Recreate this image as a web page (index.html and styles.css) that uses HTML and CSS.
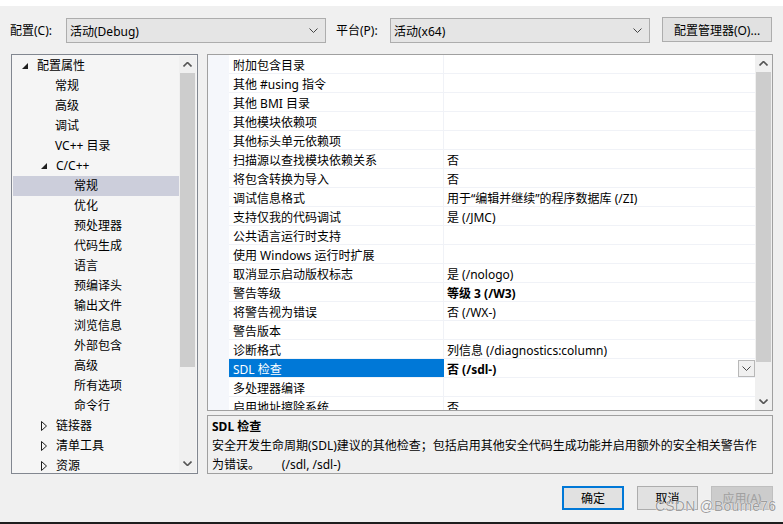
FILE: index.html
```html
<!DOCTYPE html>
<html lang="zh">
<head>
<meta charset="utf-8">
<link rel="stylesheet" href="styles.css">
</head>
<body>
<div class="app">
  <div class="topstrip"></div>
  <div class="toolbar">
    <span class="lbl">配置(C):</span>
    <div class="combo combo-config"><span>活动(Debug)</span><svg class="chev" width="9" height="5" viewBox="0 0 9 5"><path d="M0.5 0.5 L4.5 4.5 L8.5 0.5" fill="none" stroke="#444" stroke-width="1"/></svg></div>
    <span class="lbl lbl-plat">平台(P):</span>
    <div class="combo combo-plat"><span>活动(x64)</span><svg class="chev" width="9" height="5" viewBox="0 0 9 5"><path d="M0.5 0.5 L4.5 4.5 L8.5 0.5" fill="none" stroke="#444" stroke-width="1"/></svg></div>
    <div class="btn btn-mgr">配置管理器(O)...</div>
  </div>
  <div class="main">
    <div class="tree">
      <div class="tree-list">
        <div class="ti l0"><svg class="exp" width="6" height="6" viewBox="0 0 6 6"><polygon points="6,0 6,6 0,6" fill="#1e1e1e"/></svg><span>配置属性</span></div>
        <div class="ti l1">常规</div>
        <div class="ti l1">高级</div>
        <div class="ti l1">调试</div>
        <div class="ti l1">VC++ 目录</div>
        <div class="ti l1e"><svg class="exp" width="6" height="6" viewBox="0 0 6 6"><polygon points="6,0 6,6 0,6" fill="#1e1e1e"/></svg><span>C/C++</span></div>
        <div class="ti l2 sel">常规</div>
        <div class="ti l2">优化</div>
        <div class="ti l2">预处理器</div>
        <div class="ti l2">代码生成</div>
        <div class="ti l2">语言</div>
        <div class="ti l2">预编译头</div>
        <div class="ti l2">输出文件</div>
        <div class="ti l2">浏览信息</div>
        <div class="ti l2">外部包含</div>
        <div class="ti l2">高级</div>
        <div class="ti l2">所有选项</div>
        <div class="ti l2">命令行</div>
        <div class="ti l1e"><svg class="exp2" width="6" height="10" viewBox="0 0 6 10"><polygon points="0.5,0.5 5.5,5 0.5,9.5" fill="none" stroke="#1e1e1e" stroke-width="1"/></svg><span>链接器</span></div>
        <div class="ti l1e"><svg class="exp2" width="6" height="10" viewBox="0 0 6 10"><polygon points="0.5,0.5 5.5,5 0.5,9.5" fill="none" stroke="#1e1e1e" stroke-width="1"/></svg><span>清单工具</span></div>
        <div class="ti l1e"><svg class="exp2" width="6" height="10" viewBox="0 0 6 10"><polygon points="0.5,0.5 5.5,5 0.5,9.5" fill="none" stroke="#1e1e1e" stroke-width="1"/></svg><span>资源</span></div>
      </div>
      <div class="sbar sbar-tree">
        <div class="arr"><svg width="9" height="5" viewBox="0 0 9 5"><path d="M0.5 4.5 L4.5 0.5 L8.5 4.5" fill="none" stroke="#555" stroke-width="1.6"/></svg></div>
        <div class="track"><div class="thumb thumb-tree"></div></div>
        <div class="arr"><svg width="9" height="5" viewBox="0 0 9 5"><path d="M0.5 0.5 L4.5 4.5 L8.5 0.5" fill="none" stroke="#555" stroke-width="1.6"/></svg></div>
      </div>
    </div>
    <div class="right">
      <div class="grid">
        <div class="margin"></div>
        <div class="rows">
          <div class="row"><div class="nm">附加包含目录</div><div class="vl"></div></div>
          <div class="row"><div class="nm">其他 #using 指令</div><div class="vl"></div></div>
          <div class="row"><div class="nm">其他 BMI 目录</div><div class="vl"></div></div>
          <div class="row"><div class="nm">其他模块依赖项</div><div class="vl"></div></div>
          <div class="row"><div class="nm">其他标头单元依赖项</div><div class="vl"></div></div>
          <div class="row"><div class="nm">扫描源以查找模块依赖关系</div><div class="vl">否</div></div>
          <div class="row"><div class="nm">将包含转换为导入</div><div class="vl">否</div></div>
          <div class="row"><div class="nm">调试信息格式</div><div class="vl">用于“编辑并继续”的程序数据库 (/ZI)</div></div>
          <div class="row"><div class="nm">支持仅我的代码调试</div><div class="vl">是 (/JMC)</div></div>
          <div class="row"><div class="nm">公共语言运行时支持</div><div class="vl"></div></div>
          <div class="row"><div class="nm">使用 Windows 运行时扩展</div><div class="vl"></div></div>
          <div class="row"><div class="nm">取消显示启动版权标志</div><div class="vl">是 (/nologo)</div></div>
          <div class="row"><div class="nm">警告等级</div><div class="vl b">等级 3 (/W3)</div></div>
          <div class="row"><div class="nm">将警告视为错误</div><div class="vl">否 (/WX-)</div></div>
          <div class="row"><div class="nm">警告版本</div><div class="vl"></div></div>
          <div class="row"><div class="nm">诊断格式</div><div class="vl">列信息 (/diagnostics:column)</div></div>
          <div class="row selrow"><div class="nm">SDL 检查</div><div class="vl b"><span class="vt">否 (/sdl-)</span><div class="ddbtn"><svg width="9" height="5" viewBox="0 0 9 5"><path d="M0.5 0.5 L4.5 4.5 L8.5 0.5" fill="none" stroke="#444" stroke-width="1"/></svg></div></div></div>
          <div class="row"><div class="nm">多处理器编译</div><div class="vl"></div></div>
          <div class="row"><div class="nm">启用地址擦除系统</div><div class="vl">否</div></div>
        </div>
        <div class="sbar sbar-grid">
          <div class="arr"><svg width="9" height="5" viewBox="0 0 9 5"><path d="M0.5 4.5 L4.5 0.5 L8.5 4.5" fill="none" stroke="#555" stroke-width="1.6"/></svg></div>
          <div class="track"><div class="thumb thumb-grid"></div></div>
          <div class="arr"><svg width="9" height="5" viewBox="0 0 9 5"><path d="M0.5 0.5 L4.5 4.5 L8.5 0.5" fill="none" stroke="#555" stroke-width="1.6"/></svg></div>
        </div>
      </div>
      <div class="desc">
        <div class="desc-title">SDL 检查</div>
        <div class="desc-text">安全开发生命周期(SDL)建议的其他检查；包括启用其他安全代码生成功能并启用额外的安全相关警告作为错误。&nbsp;&nbsp;&nbsp;&nbsp;&nbsp;&nbsp;&nbsp;(/sdl, /sdl-)</div>
      </div>
    </div>
  </div>
  <div class="buttons">
    <div class="btn btn-ok">确定</div>
    <div class="btn btn-cancel">取消</div>
    <div class="btn btn-apply">应用(A)</div>
  </div>
  <div class="bottomstrip"></div>
  <div class="watermark">CSDN @Bourne76</div>
</div>
</body>
</html>
```

FILE: styles.css
```css
* { box-sizing: border-box; }
html, body { margin: 0; padding: 0; }
body {
  width: 783px;
  height: 524px;
  overflow: hidden;
  background: #f0f0f0;
  font-family: "Segoe UI", "Noto Sans", "Noto Sans CJK SC", sans-serif;
  font-size: 12px;
  color: #000;
}
.app { position: relative; width: 783px; height: 524px; display: flex; flex-direction: column; }
.topstrip { height: 6px; background: #fff; }
.toolbar {
  display: flex;
  align-items: center;
  height: 25px;
  margin-top: 12px;
  padding-left: 10px;
}
.lbl { width: 56px; line-height: 25px; }
.lbl-plat { margin-left: 10px; width: 54px; }
.combo {
  height: 25px;
  border: 1px solid #adadad;
  background: #e5e5e5;
  display: flex;
  align-items: center;
  justify-content: space-between;
  padding: 0 5px 0 3px;
}
.combo-config { width: 260px; }
.combo-plat { width: 260px; }
.chev { margin-right: 2px; }
.btn {
  height: 25px;
  border: 1px solid #adadad;
  background: #e1e1e1;
  display: flex;
  align-items: center;
  justify-content: center;
}
.btn-mgr { width: 110px; margin-left: 12px; margin-top: -2px; }

.main { display: flex; margin-top: 11px; padding-left: 11px; }
.tree {
  width: 187px;
  height: 420px;
  border: 1px solid #828790;
  background: #f5f5f5;
  display: flex;
  padding: 1px 1px 1px 1px;
}
.tree-list { flex: 1; overflow: hidden; }
.ti { height: 20px; line-height: 20px; white-space: nowrap; display: flex; align-items: center; }
.ti.l0 { padding-left: 9px; }
.ti.l0 .exp { margin-right: 9px; }
.ti.l1 { padding-left: 42px; }
.ti.l1e { padding-left: 28px; }
.ti.l1e .exp { margin-right: 9px; }
.ti.l1e .exp2 { margin-right: 9px; }
.ti.l2 { padding-left: 61px; }
.ti.sel { background: #cccedb; }

.sbar { width: 17px; display: flex; flex-direction: column; background: #f0f0f0; }
.sbar .arr { height: 17px; display: flex; align-items: center; justify-content: center; }
.sbar .track { flex: 1; position: relative; }
.thumb { background: #cdcdcd; margin: 0 1px; }
.thumb-tree { height: 294px; }
.thumb-grid { height: 290px; }

.right { margin-left: 9px; width: 566px; display: flex; flex-direction: column; }
.grid {
  height: 357px;
  border: 1px solid #a0a0a0;
  background: #fff;
  display: flex;
}
.margin { width: 21px; background: #f5f7fb; }
.rows { flex: 1; overflow: hidden; }
.row { display: flex; height: 19px; border-bottom: 1px solid #f0f2f7; }
.nm { width: 215px; padding: 3px 0 0 4px; line-height: 15px; white-space: nowrap; border-right: 1px solid #f0f2f7; }
.vl { flex: 1; padding: 3px 0 0 3px; line-height: 15px; white-space: nowrap; display: flex; align-items: center; }
.vl.b { font-weight: bold; }
.selrow .nm { background: #0078d7; color: #fff; border-right-color: #0078d7; }
.selrow .vl { padding-top: 0; }
.selrow .vt { padding-top: 3px; }
.vt { flex: 1; }
.ddbtn {
  width: 17px;
  height: 17px;
  border: 1px solid #b8b8b8;
  background: #f0f0f0;
  display: flex;
  align-items: center;
  justify-content: center;
  margin-right: 0;
}
.sbar-grid { background: #f0f0f0; }

.desc {
  margin-top: 4px;
  height: 59px;
  border: 1px solid #a0a0a0;
  background: #f0f0f0;
  padding: 1px 4px 0 4px;
}
.desc-title { font-weight: bold; line-height: 19px; }
.desc-text { line-height: 19px; }

.buttons { display: flex; margin-top: 12px; padding-left: 562px; gap: 13px; }
.btn-ok { width: 62px; height: 24px; border: 2px solid #0078d7; }
.btn-cancel { width: 61px; height: 24px; }
.btn-apply { width: 62px; height: 24px; color: #a0a0a0; background: #cccccc; border-color: #bfbfbf; margin-left: 0; }

.bottomstrip { position: absolute; left: 0; right: 0; bottom: 0; height: 2px; background: #1e1e1e; }
.watermark {
  position: absolute;
  left: 655px;
  top: 498px;
  font-family: "Liberation Sans", Arial, sans-serif;
  font-size: 14px;
  color: rgba(140,140,140,0.85);
  text-shadow: 0 0 1px #fff, 0 0 1px #fff;
  letter-spacing: 0.2px;
}
```
